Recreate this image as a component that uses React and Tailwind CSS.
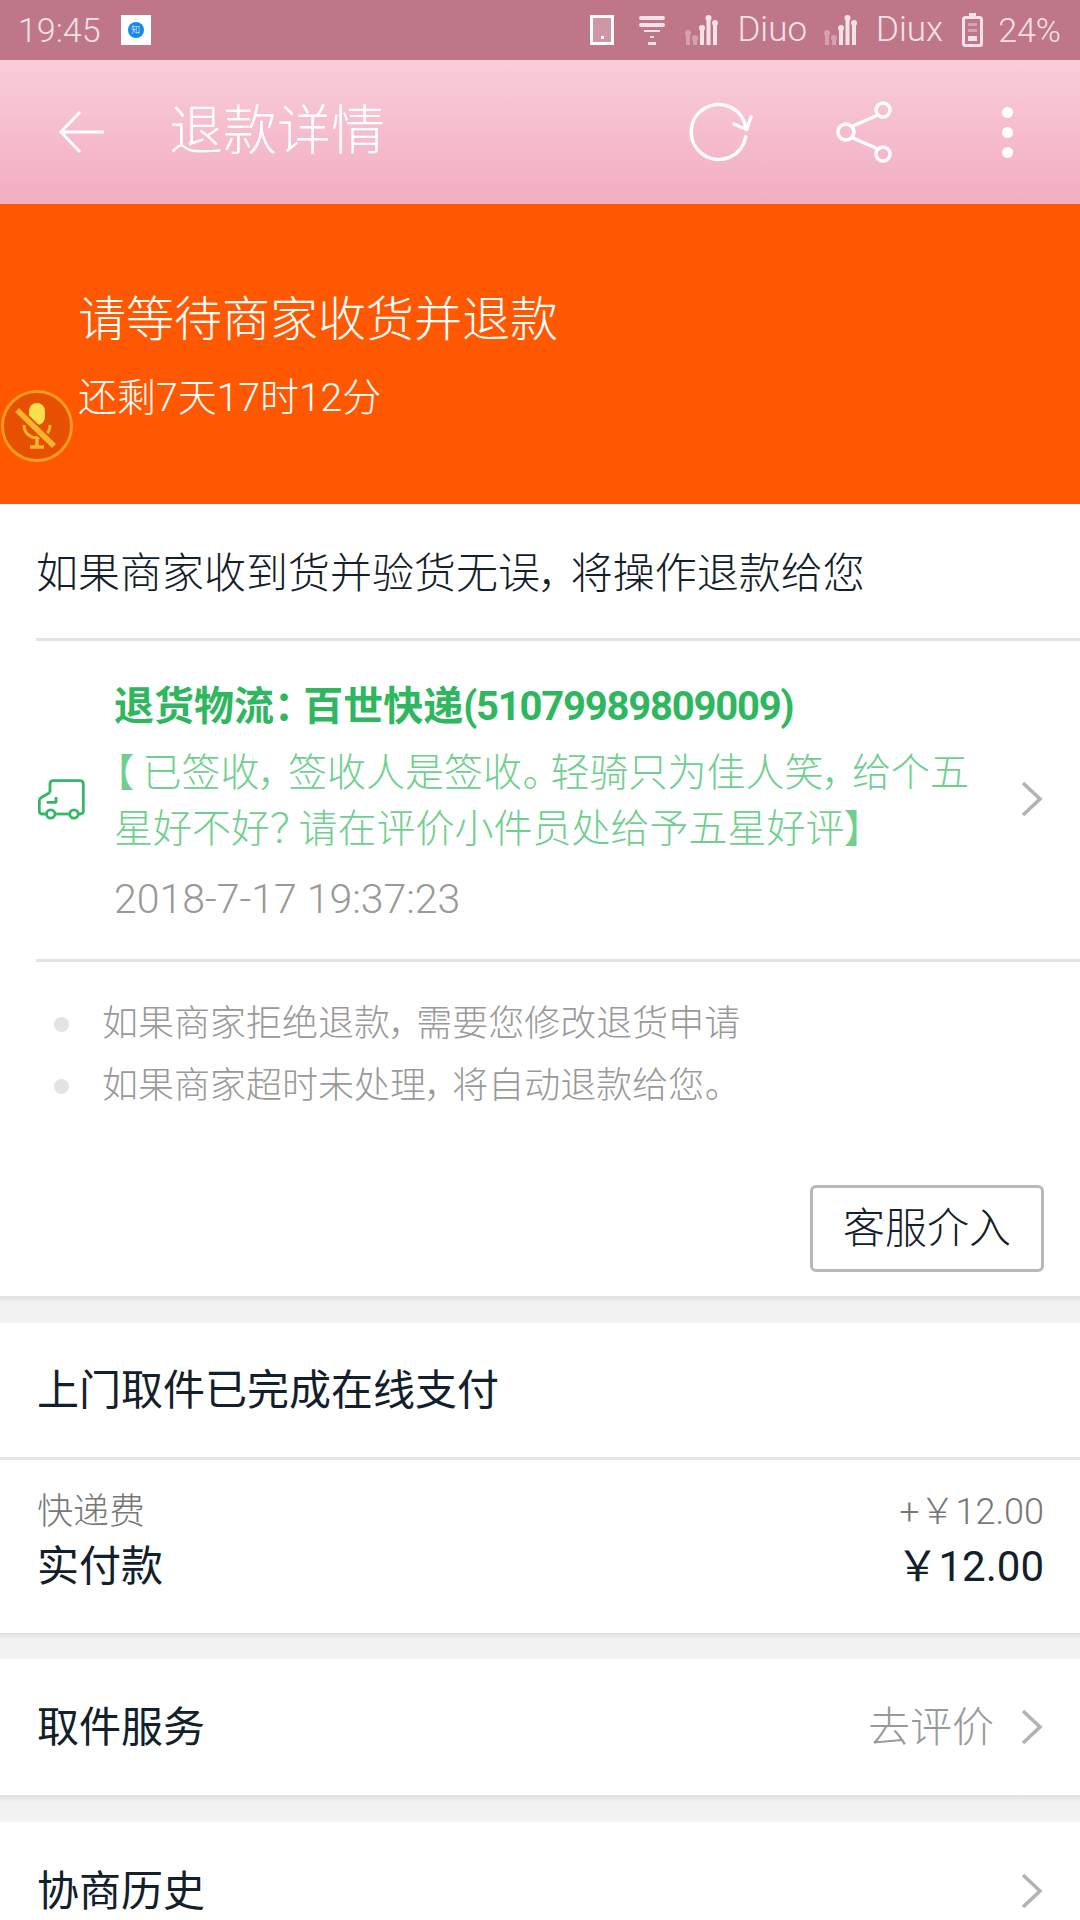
import React from 'react';

const cjk = 'font-["Roboto","Noto_Sans_CJK_SC",sans-serif] [font-feature-settings:"palt"]';

// punctuation in the reference is wider than palt gives but narrower than full width
function P({ children }) {
    return <span className="tracking-[0.23em]">{children}</span>;
}

function Chevron({ className }) {
    return (
        <svg viewBox="0 0 24 36" className={className} fill="none" stroke="#b3b3b3" strokeWidth="3.6">
            <path d="M3 2 L20 18 L3 34" />
        </svg>
    );
}

function SignalIcon() {
    return (
        <svg width="33" height="30" viewBox="0 0 33 30" fill="#f3e3e8" className="shrink-0">
            <g opacity="0.4">
                <circle cx="3" cy="18" r="3" />
                <rect x="1" y="18" width="4" height="12" />
                <circle cx="10" cy="23" r="3" />
                <rect x="8" y="23" width="4" height="7" />
            </g>
            <circle cx="17" cy="13" r="3" />
            <rect x="15" y="13" width="4" height="17" />
            <circle cx="23.5" cy="3" r="3" />
            <rect x="21.5" y="3" width="4" height="27" />
            <circle cx="30" cy="8" r="3" />
            <rect x="28" y="8" width="4" height="22" />
        </svg>
    );
}

function StatusBar() {
    return (
        <div className="h-[60px] bg-[#c07689] flex items-center justify-between pl-[18px] pr-[19px] text-[#f3e3e8] text-[34px] font-['Roboto',sans-serif] font-light">
            <div className="flex items-center gap-[20px]">
                <span>19:45</span>
                <div className="w-[30px] h-[30px] bg-white flex items-center justify-center">
                    <div className="w-[16px] h-[16px] rounded-full bg-[#1787ea] text-white text-[9px] leading-[16px] text-center font-['Noto_Sans_CJK_SC',sans-serif]">知</div>
                </div>
            </div>
            <div className="flex items-center">
                <svg width="24" height="30" viewBox="0 0 24 30" fill="none" className="mr-[24px]">
                    <rect x="1.5" y="1.5" width="21" height="27" fill="#cf96a6" stroke="#fff" strokeWidth="3" />
                    <rect x="11" y="21" width="3" height="3" fill="#fff" />
                </svg>
                <svg width="28" height="30" viewBox="0 0 28 30" fill="#f3e3e8" className="mr-[19px]">
                    <rect x="1" y="1" width="26" height="4" rx="2" />
                    <rect x="1" y="8" width="26" height="4" rx="2" />
                    <rect x="6" y="15" width="16" height="2" />
                    <rect x="12" y="21" width="4" height="2" />
                    <rect x="10" y="27" width="8" height="3" />
                </svg>
                <SignalIcon />
                <span className="ml-[19px] mr-[17px] text-[35px]">Diuo</span>
                <SignalIcon />
                <span className="ml-[19px] mr-[19px] text-[35px]">Diux</span>
                <svg width="21" height="34" viewBox="0 0 21 34" fill="none" className="mr-[15px]">
                    <rect x="7" y="0" width="7" height="3" fill="#f3e3e8" />
                    <rect x="1.5" y="4.5" width="18" height="28" rx="2" stroke="#f3e3e8" strokeWidth="3" />
                    <rect x="6" y="10" width="9" height="3" fill="#f3e3e8" opacity="0.4" />
                    <rect x="6" y="16" width="9" height="3" fill="#f3e3e8" opacity="0.4" />
                    <rect x="6" y="23" width="9" height="5" fill="#f3e3e8" />
                </svg>
                <span>24%</span>
            </div>
        </div>
    );
}

function AppBar() {
    return (
        <div className="h-[144px] bg-gradient-to-b from-[#f8cdda] to-[#f3adc3] flex items-center text-white">
            <svg width="48" height="44" viewBox="0 0 48 44" fill="none" stroke="#fff" strokeWidth="3" className="ml-[58px]">
                <path d="M22 2 L3 22 L22 42 M3 22 H46" />
            </svg>
            <span className="ml-[63px] w-[217px] text-[54px] leading-[60px] font-light">退款详情</span>
            <svg width="64" height="62" viewBox="0 0 64 62" fill="none" stroke="#fff" strokeWidth="3.5" strokeLinecap="round" strokeLinejoin="round" className="ml-[303px]">
                <path d="M56.7 36 A27.5 27.5 0 1 1 57 28" />
                <path d="M62 16 L57.5 28.5 L45 23" />
            </svg>
            <svg width="58" height="62" viewBox="0 0 58 62" fill="none" stroke="#fff" strokeWidth="3.5" className="ml-[82px]">
                <circle cx="11" cy="31" r="8" />
                <circle cx="48" cy="9" r="7" />
                <circle cx="48" cy="53" r="7" />
                <path d="M18 25 L43 14 M18 37 L43 48" />
            </svg>
            <div className="ml-[109px] flex flex-col gap-[9px]">
                <div className="w-[11px] h-[11px] rounded-full bg-white"></div>
                <div className="w-[11px] h-[11px] rounded-full bg-white"></div>
                <div className="w-[11px] h-[11px] rounded-full bg-white"></div>
            </div>
        </div>
    );
}

function Banner() {
    return (
        <div className="relative h-[300px] bg-[#ff5800] text-white pl-[78px] pt-[88px]">
            <div className="text-[48px] leading-[56px] font-light">请等待商家收货并退款</div>
            <div className="text-[39px] leading-[48px] mt-[26px] font-light">还剩7天17时12分</div>
            <div className="absolute left-[1px] top-[186px] w-[72px] h-[72px] rounded-full bg-[#e65000] border-[3px] border-[#f59a1c] flex items-center justify-center">
                <svg width="46" height="50" viewBox="0 0 46 50" fill="none">
                    <rect x="15" y="2" width="16" height="22" rx="8" fill="#fbe04c" />
                    <path d="M10 24 C10 41 36 41 36 24" stroke="#f5b52c" strokeWidth="3" />
                    <path d="M23 37 V46 M16 46 H30" stroke="#f5b52c" strokeWidth="3.5" />
                    <path d="M3 9 L40 45" stroke="#e65000" strokeWidth="9" />
                    <path d="M3 9 L40 45" stroke="#f5b52c" strokeWidth="5.5" />
                </svg>
            </div>
        </div>
    );
}

function Logistics() {
    return (
        <div className="h-[324px] ml-[36px] border-t-[3px] border-b-[3px] border-[#e3e3e3] flex items-center relative">
            <svg width="50" height="46" viewBox="0 0 50 46" fill="none" stroke="#36b765" strokeWidth="2.8" strokeLinejoin="round" className="shrink-0 ml-[2px]">
                <path d="M12 15.5 V7 Q12 3.7 15 3.7 H42 Q45.3 3.7 45.3 7 V34 Q45.3 37 42 37 H40" />
                <path d="M12 15.5 L4 20 Q1.3 21.5 1.3 24 V34 Q1.3 37 4 37 H8.5" />
                <path d="M18 20 V25.3 H8.7" />
                <circle cx="12.7" cy="37" r="4.2" />
                <circle cx="36" cy="37" r="4.2" />
                <path d="M17 37 H32" />
            </svg>
            <div className="ml-[26px] w-[880px] shrink-0 pt-[10px]">
                <div className="text-[40px] leading-[48px] font-bold text-[#2fb75f]">退货物流<P>：</P>百世快递<span className="tracking-[-1.2px]">(51079989809009)</span></div>
                <div className="mt-[14px] text-[39px] leading-[56px] text-[#6fcf8e] font-light"><P>【</P>已签收<P>，</P>签收人是签收<P>。</P>轻骑只为佳人笑<P>，</P>给个五<br />星好不好<P>？</P>请在评价小件员处给予五星好评】</div>
                <div className="mt-[14px] text-[41px] leading-[56px] text-[#999999] font-light">2018-7-17 19:37:23</div>
            </div>
            <Chevron className="absolute right-[36px] top-[140px] w-[24px] h-[36px]" />
        </div>
    );
}

function Bullet({ children }) {
    return (
        <div className="flex items-center h-[62px]">
            <div className="ml-[54px] w-[15px] h-[15px] rounded-full bg-[#e3e3e3]"></div>
            <span className="ml-[33px] text-[36px] text-[#999999] font-light">{children}</span>
        </div>
    );
}

function Gap({ className }) {
    return <div className={`${className} bg-gradient-to-b from-[#e0e0e0] via-[#f2f2f2] via-[25%] to-[#f3f3f3]`}></div>;
}

function Row({ title, extra, last }) {
    return (
        <div className={`${last ? 'h-[98px] pt-[40px]' : 'h-[136px]'} bg-white flex items-center justify-between pl-[37px] pr-[36px] text-[42px] text-[#12202b]`}>
            <span>{title}</span>
            <div className="flex items-center">
                {extra && <span className="text-[#999999] mr-[26px] font-light">{extra}</span>}
                <Chevron className="w-[24px] h-[36px]" />
            </div>
        </div>
    );
}

export default function App() {
    return (
        <div className={`w-[1080px] h-[1920px] overflow-hidden bg-white ${cjk}`}>
            <StatusBar />
            <AppBar />
            <Banner />

            <div className="bg-white h-[792px]">
                <div className="h-[134px] pl-[36px] pt-[4px] flex items-center text-[42px] text-[#12202b] font-light">如果商家收到货并验货无误<P>，</P>将操作退款给您</div>
                <Logistics />
                <div className="pt-[31px]">
                    <Bullet>如果商家拒绝退款<P>，</P>需要您修改退货申请</Bullet>
                    <Bullet>如果商家超时未处理<P>，</P>将自动退款给您。</Bullet>
                </div>
                <div className="flex justify-end pr-[36px] mt-[68px]">
                    <button className="w-[234px] h-[87px] rounded-[6px] border-[3px] border-[#b8b8b8] text-[42px] text-[#12202b] font-light">客服介入</button>
                </div>
            </div>
            <Gap className="h-[27px]" />

            <div className="bg-white">
                <div className="h-[137px] pl-[37px] flex items-center text-[42px] text-[#12202b] border-b-[3px] border-[#e6e6e6]">上门取件已完成在线支付</div>
                <div className="h-[173px] pl-[37px] pr-[36px] pt-[30px]">
                    <div className="flex justify-between text-[36px] leading-[44px] text-[#777777] font-light">
                        <span>快递费</span>
                        <span className="[font-feature-settings:normal]">+￥12.00</span>
                    </div>
                    <div className="flex justify-between text-[42px] leading-[56px] text-[#12202b] mt-[5px]">
                        <span>实付款</span>
                        <span className="[font-feature-settings:normal]">￥12.00</span>
                    </div>
                </div>
            </div>
            <Gap className="h-[26px]" />

            <Row title="取件服务" extra="去评价" />
            <Gap className="h-[27px]" />
            <Row title="协商历史" last />
        </div>
    );
}
